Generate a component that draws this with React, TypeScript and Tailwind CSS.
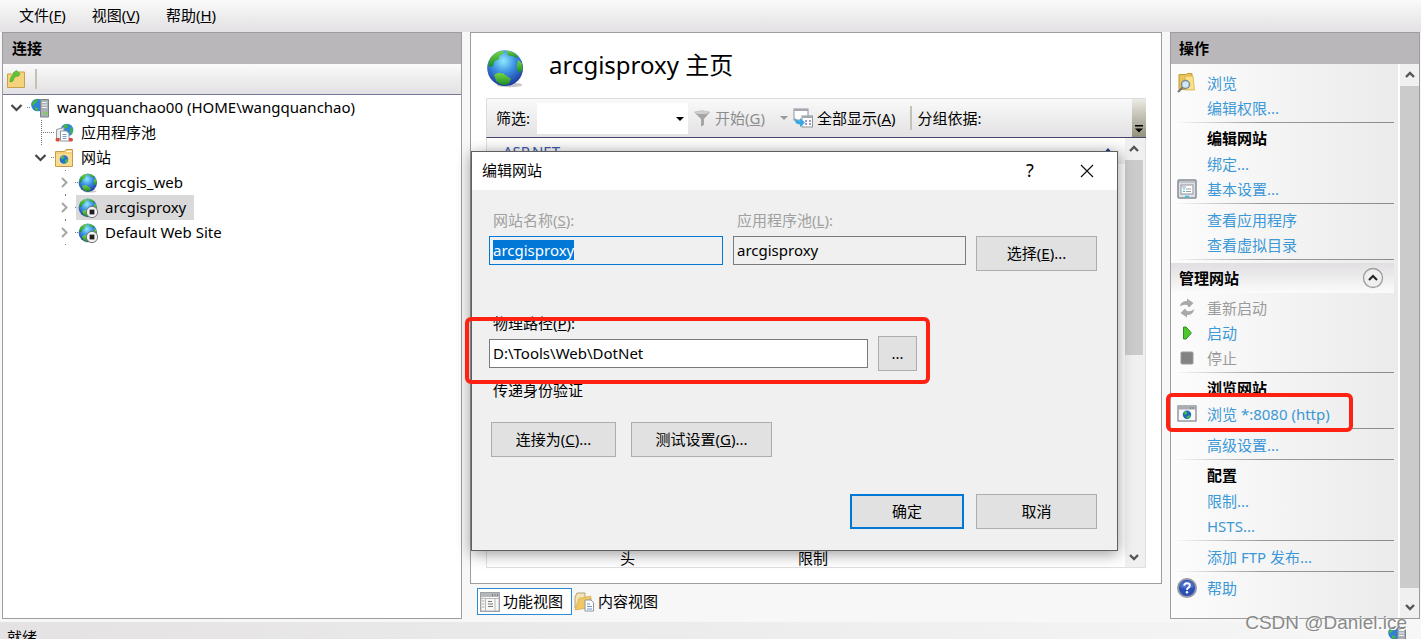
import { useEffect, useRef } from "react";
import type { ReactNode } from "react";

const Globe = ({ className = "size-5", stopped = false }: { className?: string; stopped?: boolean }) => (
  <svg viewBox="0 0 20 20" className={`${className} shrink-0`} aria-hidden="true">
    <defs>
      <radialGradient id="sea" cx="0.45" cy="0.3" r="0.72">
        <stop offset="0" stopColor="#8eeafd" />
        <stop offset="0.45" stopColor="#3c92e2" />
        <stop offset="1" stopColor="#1c3299" />
      </radialGradient>
      <linearGradient id="land" x1="0" y1="0" x2="0" y2="1">
        <stop offset="0" stopColor="#7ad63c" />
        <stop offset="1" stopColor="#178a2b" />
      </linearGradient>
    </defs>
    <ellipse cx="12" cy="18.4" rx="6.5" ry="1.2" fill="#c6c6c6" />
    <circle cx="9.8" cy="9.8" r="9.2" fill="url(#sea)" />
    <path d="M1.2 8.4 2.2 4.6 5.3 1.8 9 .8 8.8 2.3 6.8 3.4 6.6 5.2 4.4 6.2 3.6 8.6 2 9.4z" fill="url(#land)" />
    <path d="M10.6.8 14.5 1.9 16.6 4.1 15.2 4.5 13.3 3.3 12 3.7 10.9 2.4z" fill="url(#land)" />
    <path d="M16.5 5.6 18.2 7 18.9 10 17.4 12.3 16 10.8 15.8 8.4z" fill="url(#land)" />
    <path d="M4.2 13.2 6.2 12.2 8.8 12.6 10.6 13.9 12.8 15.2 12 17.4 9.8 18.6 7.2 17.9 5.2 16.4z" fill="url(#land)" />
    {stopped && (
      <>
        <circle cx="14" cy="14" r="5.6" fill="#f4f4f4" stroke="#777" />
        <rect x="11.6" y="11.6" width="4.8" height="4.8" fill="#1f1f1f" />
      </>
    )}
  </svg>
);

const ServerIcon = () => (
  <svg viewBox="0 0 20 20" className="size-5 shrink-0" aria-hidden="true">
    <circle cx="7.5" cy="7" r="6.3" fill="#2f7fdc" />
    <path d="M2 5 5 1.6 8 1 7 4 4 6.5 3 9zM5 9l3 1v3l-3-1z" fill="#45b83a" />
    <path d="M10.5 1.5h8V19h-8z" fill="#a9b0b5" stroke="#7a8288" />
    <path d="M12 4.5h5M12 7h5M12 9.5h5" stroke="#eef1f3" />
    <rect x="14.5" y="14" width="2.5" height="2.5" fill="#6edb3b" />
  </svg>
);

const PoolIcon = () => (
  <svg viewBox="0 0 20 20" className="size-5 shrink-0" aria-hidden="true">
    <circle cx="13" cy="7" r="6.3" fill="#2f86dc" />
    <path d="M9 2 13 1l1 3-3 2zM17 3l2 4-1 5-2-3z" fill="#43b53b" />
    <path d="M2.5 6.5 10 4.5v11l-7.5 1z" fill="#ececec" stroke="#999" />
    <path d="M6.5 8h6L15 10.5V18H6.5z" fill="#fff" stroke="#8f9499" />
    <path d="M8.5 11.5h4M8.5 13.5h4M8.5 15.5h4" stroke="#6f9ad2" />
    <path d="M1.5 16.5Q1.5 15 3 15h2.5v3.5H3q-1.5 0-1.5-2zM15 15h2.5q1.500 0 1.5 1.5 0 2-1.5 2H15z" fill="#d64a42" />
  </svg>
);

const SitesIcon = () => (
  <svg viewBox="0 0 20 20" className="size-5 shrink-0" aria-hidden="true">
    <path d="M1.5 3.5h9l1.5-2h6.5v17h-17z" fill="#f3cf77" stroke="#c89c45" />
    <path d="M2 6h16v12H2z" fill="#f8dc92" />
    <path d="M12.5 3.5h5" stroke="#fff" />
    <circle cx="10" cy="11.5" r="4.3" fill="#2572cf" />
    <path d="M6.5 9.5 9 7.5l1.5 2-2 2zM11 12l3-1-.5 3-2 1.5z" fill="#52bd3d" />
  </svg>
);

const Chevron = ({ up = false }: { up?: boolean }) => (
  <svg viewBox="0 0 10 8" className="w-[10px] h-2" aria-hidden="true">
    <path d={up ? "M1 6 5 2 9 6" : "M1 2 5 6 9 2"} fill="none" stroke="#555" strokeWidth="2.4" />
  </svg>
);

const Gutter = ({ kind }: { kind: "open" | "leaf" | "closed" }) => (
  <svg viewBox="0 0 20 25" className="w-5 h-[25px] shrink-0 overflow-visible" fill="none" aria-hidden="true">
    {kind === "open" && (
      <>
        <path d="M3.5 10 8.5 15 13.5 10" stroke="#444" strokeWidth="2.2" />
        <path d="M19 12.5h4" stroke="#777" strokeDasharray="1 1" />
      </>
    )}
    {kind === "leaf" && <path d="M9.5 0v25M11 12.5h12" stroke="#777" strokeDasharray="1 1" />}
    {kind === "closed" && (
      <>
        <path d="M6 8 10.5 12.5 6 17" stroke="#a6a6a6" strokeWidth="2" />
        <path d="M9.5 0v2M9.5 24v1M19 12.5h4" stroke="#777" strokeDasharray="1 1" />
      </>
    )}
  </svg>
);

type TreeRowProps = {
  icon: ReactNode;
  label: string;
  kind: "open" | "leaf" | "closed";
  className?: string;
  selected?: boolean;
};

const TreeRow = ({ icon, label, kind, className = "", selected = false }: TreeRowProps) => (
  <li className={`flex items-center h-[25px] ${className}`}>
    <Gutter kind={kind} />
    <button className={`flex items-center gap-[7px] h-[25px] pl-0.5 pr-2 whitespace-nowrap ${selected ? "bg-[#d9d9d9]" : ""}`}>
      {icon}
      <span className="pb-0.5">{label}</span>
    </button>
  </li>
);

const Separator = () => (
  <div className="h-1.5 pt-0.5 pl-1">
    <div className="h-px bg-linear-to-r from-transparent via-[#999] via-40% to-[#8c8c8c]" />
  </div>
);

const ActionTitle = ({ children }: { children: ReactNode }) => (
  <h3 className="h-[25px] pl-9 leading-[25px] font-bold">{children}</h3>
);

const Action = ({ icon, children, disabled = false }: { icon?: ReactNode; children: ReactNode; disabled?: boolean }) => (
  <div className="flex items-center h-[25px] pl-1.5">
    <span className="flex w-[30px] shrink-0">{icon}</span>
    {disabled
      ? <span className="text-[#9b9b9b]">{children}</span>
      : <a href="#" className="text-[#3c98d6] whitespace-nowrap">{children}</a>}
  </div>
);

const BrowseIcon = () => (
  <svg viewBox="0 0 20 20" className="size-5" aria-hidden="true">
    <path d="M2 1.5h7l1-1h5v16H2z" fill="#e9c55a" stroke="#c49a35" />
    <path d="M8 3h8l1.5 14H8z" fill="#fbe08a" stroke="#d0a845" strokeWidth=".7" />
    <circle cx="8.5" cy="11.5" r="4" fill="#cfe9fa" stroke="#7f8a94" strokeWidth="1.5" />
    <path d="M5.5 14.5 1 19" stroke="#777" strokeWidth="2.2" />
  </svg>
);

const SettingsIcon = () => (
  <svg viewBox="0 0 20 20" className="size-5" aria-hidden="true">
    <rect x="1" y="1" width="18" height="18" rx="1" fill="#dfe2e6" stroke="#868b92" strokeWidth="1.5" />
    <path d="M2 3h16" stroke="#b4b8be" strokeWidth="1.5" />
    <rect x="4" y="6" width="12" height="9" fill="#fff" stroke="#8d9299" />
    <path d="M6 10h2M6 12.5h2" stroke="#3fb2e0" />
    <path d="M9 10h5M9 12.5h5M5 8h4" stroke="#9a9fa5" />
    <path d="M8 17.5h4" stroke="#27c3e8" strokeWidth="1.5" />
  </svg>
);

const RestartIcon = () => (
  <svg viewBox="0 0 20 20" className="size-5" fill="#a9a9a9" aria-hidden="true">
    <path d="M3 8.5Q3.500 3 10 3V.5l6.500 4.500L12 9.500 10 7Q6 6 3 8.500z" />
    <path d="M17 11Q16.500 17 10 17v2.500L3.500 15 8 10.500l2 2.500q4 1 7-2z" />
  </svg>
);

const StartIcon = () => (
  <svg viewBox="0 0 20 20" className="size-5" aria-hidden="true">
    <path d="M6.5 4H9l5 5.5v1L9 16H6.5z" fill="#4cc82c" stroke="#2a8f1b" />
  </svg>
);

const StopIcon = () => (
  <svg viewBox="0 0 20 20" className="size-5" aria-hidden="true">
    <rect x="4" y="4" width="12" height="12" rx="1" fill="#828282" stroke="#9a9a9a" />
  </svg>
);

const SiteWindowIcon = () => (
  <svg viewBox="0 0 20 20" className="size-5" aria-hidden="true">
    <rect x="1" y="2" width="18" height="15" fill="#f8f8f8" stroke="#868b92" strokeWidth="1.3" />
    <path d="M1 4h18" stroke="#a8adb4" strokeWidth="3" />
    <path d="M13 4h1M15.5 4h1" stroke="#555" />
    <circle cx="10" cy="10.8" r="4.2" fill="#2165bd" />
    <path d="M6.5 9 9 7l1.5 2-2 2zM9 13l3.500-2 1 1.500-2.500 2.300z" fill="#3cc240" />
  </svg>
);

const HelpIcon = () => (
  <svg viewBox="0 0 20 20" className="size-5" aria-hidden="true">
    <circle cx="10" cy="10" r="9" fill="#2c4fb5" stroke="#9599a5" strokeWidth="2" />
    <path d="M3 9a7 6 0 0 1 14 0q-7 3-14 0z" fill="#6486dc" opacity=".6" />
    <path d="M7.200 7.800Q7.300 5.200 10 5.200q2.800 0 2.800 2.300 0 1.500-1.600 2.400-1.200.7-1.200 2" fill="none" stroke="#fff" strokeWidth="1.9" />
    <circle cx="10" cy="14.300" r="1.2" fill="#fff" />
  </svg>
);

const ShowAllIcon = () => (
  <svg viewBox="0 0 20 20" className="size-5" aria-hidden="true">
    <rect x="1" y="1" width="14" height="11" fill="#fff" stroke="#8e949b" />
    <path d="M1 2h14" stroke="#a4a9b0" strokeWidth="2" />
    <rect x="9" y="8" width="10.5" height="11" fill="#fff" stroke="#8e949b" />
    <path d="M9 9h10.5" stroke="#a4a9b0" strokeWidth="2" />
    <path d="M12 13h2M16 13h2M12 16h2M16 16h2" stroke="#7777bb" strokeWidth="1.5" />
    <path d="M1.5 9.500Q3 12.500 7 12.500V10l5 4.500L7 19v-2.500Q1 16 1.500 9.500z" fill="#3ba7e4" />
  </svg>
);

const FunnelIcon = () => (
  <svg viewBox="0 0 18 18" className="size-[18px]" aria-hidden="true">
    <path d="M1 3Q9 0 17 3L11 10v6l-3 1.5V10z" fill="#a5a5a5" />
    <ellipse cx="9" cy="3.5" rx="7" ry="1.6" fill="#cfcfcf" />
  </svg>
);

const FeaturesIcon = () => (
  <svg viewBox="0 0 20 20" className="size-5" aria-hidden="true">
    <rect x=".7" y=".7" width="18.6" height="18.6" fill="#f7f7f5" stroke="#9a9da2" strokeWidth="1.3" />
    <path d="M1 3h18" stroke="#b4b7bc" strokeWidth="4" />
    <path d="M12 3h1M14.500 3h1M17 3h1" stroke="#444" />
    <path d="M1 6.500h18M5.500 6v13M15 6v13" stroke="#b9b9b9" />
    <path d="M2 9h2.500M2 12h2.500M2 15h2.500" stroke="#aaa" />
    <path d="M8 9.500h4M8 12h5M8 14.500h5" stroke="#777" />
  </svg>
);

const ContentIcon = () => (
  <svg viewBox="0 0 20 20" className="size-5" aria-hidden="true">
    <path d="M3 1h8v5h6v10H1V5z" fill="#f3e3b5" stroke="#b3a478" />
    <path d="M5 6.500 17 4l-3 12-13 2z" fill="#f0c863" stroke="#cfa247" strokeWidth=".6" />
    <path d="M11 8h6l2.500 2.500V19H11z" fill="#fff" stroke="#8f959c" />
    <path d="M13 12h3M13 14.500h5M13 17h5" stroke="#6797d8" />
  </svg>
);

const dialogButton = "h-[35px] pb-0.5 border border-[#adadad] bg-[#e1e1e1]";
const dialogInput = "h-[29px] px-[3px] pb-0.5 border outline-none";

const EditSiteDialog = () => {
  const nameRef = useRef<HTMLInputElement>(null);

  useEffect(() => {
    nameRef.current?.focus();
    nameRef.current?.select();
  }, []);

  return (
    <section
      role="dialog"
      aria-labelledby="dialog-title"
      className="absolute left-[471px] top-[151px] w-[647px] h-[400px] flex flex-col border border-[#5f5f5f] bg-[#f0f0f0] shadow-[0_3px_14px_rgba(0,0,0,0.4)]"
    >
      <header className="flex items-center h-[38px] shrink-0 bg-white pl-2.5 pr-5">
        <h2 id="dialog-title" className="flex-1 pb-0.5">编辑网站</h2>
        <button className="w-[30px] pb-0.5 text-lg leading-5" aria-label="帮助">?</button>
        <button className="flex justify-center ml-8 w-5" aria-label="关闭">
          <svg viewBox="0 0 14 14" className="size-3.5" aria-hidden="true">
            <path d="M1 1 13 13M13 1 1 13" stroke="#111" strokeWidth="1.2" />
          </svg>
        </button>
      </header>

      <form className="flex flex-col flex-1 pl-[17px] pr-5 pt-5 pb-[21px]" onSubmit={(e) => e.preventDefault()}>
        <div className="flex items-start gap-2.5">
          <div className="w-[234px]">
            <label htmlFor="site-name" className="block h-[26px] pl-1 leading-5 text-[#a0a0a0]">
              网站名称(<u>S</u>):
            </label>
            <input
              id="site-name"
              ref={nameRef}
              readOnly
              defaultValue="arcgisproxy"
              className={`${dialogInput} w-full border-[#0078d7] bg-[#f0f0f0] selection:bg-[#0078d7] selection:text-white`}
            />
          </div>
          <div className="w-[233px]">
            <label htmlFor="site-pool" className="block h-[26px] pl-1 leading-5 text-[#a0a0a0]">
              应用程序池(<u>L</u>):
            </label>
            <input
              id="site-pool"
              readOnly
              defaultValue="arcgisproxy"
              className={`${dialogInput} w-full border-[#7a7a7a] bg-[#f0f0f0]`}
            />
          </div>
          <button className={`${dialogButton} flex-1 mt-[26px]`}>选择(<u>E</u>)...</button>
        </div>

        <label htmlFor="site-path" className="h-6 mt-[41px] pl-1 leading-[22px]">
          物理路径(<u>P</u>):
        </label>
        <div className="flex items-center gap-2.5">
          <input
            id="site-path"
            defaultValue="D:\Tools\Web\DotNet"
            className={`${dialogInput} w-[379px] border-[#7a7a7a] bg-white`}
          />
          <button className={`${dialogButton} w-[39px]`} aria-label="选择路径">...</button>
        </div>

        <h3 className="mt-2 pl-1 leading-[22px]">传递身份验证</h3>
        <div className="flex gap-[15px] mt-[21px] pl-0.5">
          <button className={`${dialogButton} w-[125px]`}>连接为(<u>C</u>)...</button>
          <button className={`${dialogButton} w-[141px]`}>测试设置(<u>G</u>)...</button>
        </div>

        <div className="flex justify-end gap-3 mt-auto">
          <button className="w-[114px] h-[35px] pb-0.5 border-2 border-[#0078d7] bg-[#e1e1e1]">确定</button>
          <button className={`${dialogButton} w-[121px]`}>取消</button>
        </div>
      </form>
    </section>
  );
};

const ConnectionsPane = () => (
  <aside className="w-[460px] shrink-0 flex flex-col border border-[#9d9d9d] bg-white">
    <h2 className="h-[31px] shrink-0 pl-[9px] leading-[31px] font-bold bg-[#bab7ba]">连接</h2>
    <div className="flex items-center gap-2.5 h-[31px] shrink-0 px-1 border-b border-[#77779c] bg-linear-to-b from-[#fafafa] to-[#e3e1e3]">
      <button aria-label="向上">
        <svg viewBox="0 0 18 18" className="size-[18px]" aria-hidden="true">
          <path d="M.5 4h8l2-2h7v15.500H.5z" fill="#f5d27c" stroke="#c7a04c" />
          <path d="M3 12Q3.500 5 7.500 4.500L6 3 9.500.500 13 4 11 6.500 9.500 6Q6 8 6 11z" fill="#5cc836" stroke="#3c9b28" strokeWidth=".6" />
        </svg>
      </button>
      <span className="w-0.5 h-5 bg-[#c5c2b4]" />
    </div>
    <ul className="pl-[5px]">
      <TreeRow kind="open" icon={<ServerIcon />} label="wangquanchao00 (HOME\wangquanchao)" />
      <TreeRow kind="leaf" className="pl-6" icon={<PoolIcon />} label="应用程序池" />
      <TreeRow kind="open" className="pl-6" icon={<SitesIcon />} label="网站" />
      <TreeRow kind="closed" className="pl-12" icon={<Globe />} label="arcgis_web" />
      <TreeRow kind="closed" className="pl-12" icon={<Globe stopped />} label="arcgisproxy" selected />
      <TreeRow kind="closed" className="pl-12" icon={<Globe stopped />} label="Default Web Site" />
    </ul>
  </aside>
);

const HomePane = () => (
  <main className="flex-1 min-w-0 flex flex-col">
    <div className="flex-1 flex flex-col border border-[#9d9d9d] bg-white px-[15px] pb-[15px]">
      <div className="flex items-center h-[65px] shrink-0 gap-6">
        <Globe className="size-[39px] mt-1.5" />
        <h1 className="pb-0.5 text-[24px] leading-8">arcgisproxy 主页</h1>
      </div>

      <div className="flex items-center h-10 shrink-0 border-t border-l border-[#dcdcdc] border-b border-b-[#45456f] bg-linear-to-b from-[#fafafa] to-[#e3e1e3] whitespace-nowrap">
        <label htmlFor="filter" className="w-[50px] pl-[9px]">筛选:</label>
        <div className="relative w-[151px] h-[31px]">
          <select id="filter" className="appearance-none block w-full h-full bg-white" />
          <svg viewBox="0 0 8 4" className="absolute right-1 top-[14px] w-2 h-1 pointer-events-none" aria-hidden="true">
            <path d="M0 0h8L4 4z" />
          </svg>
        </div>
        <button className="flex items-center gap-1 ml-[5px] text-[#8d8d8d]" disabled>
          <FunnelIcon />
          <span>开始(<u>G</u>)</span>
          <svg viewBox="0 0 8 4" className="w-2 h-1 ml-[11px]" fill="#9a9a9a" aria-hidden="true">
            <path d="M0 0h8L4 4z" />
          </svg>
        </button>
        <button className="flex items-center gap-1 ml-[5px]">
          <ShowAllIcon />
          <span>全部显示(<u>A</u>)</span>
        </button>
        <span className="w-0.5 h-6 ml-3.5 mr-1.5 bg-[#c5c2b4]" />
        <span>分组依据:</span>
        <button className="flex items-end justify-center w-[14px] h-full ml-auto pb-1 bg-linear-to-b from-[#ecebe6] to-[#94917c]" aria-label="更多">
          <svg viewBox="0 0 8 8" className="size-2" aria-hidden="true">
            <path d="M0 0h8v1.500H0zM0 3.500h8l-4 4z" />
          </svg>
        </button>
      </div>

      <div className="flex-1 flex border border-t-0 border-[#e0e0e0]">
        <div className="flex-1 flex flex-col justify-between">
          <div className="flex items-center h-[26px] pl-4 pr-3 bg-linear-to-b from-white to-[#ececec]">
            <h2 className="text-[#3b58a8]">ASP.NET</h2>
            <span className="flex-1 h-px ml-1 mr-4 bg-[#b9c3dc]" />
            <svg viewBox="0 0 10 6" className="w-2.5 h-1.5" fill="#173c96" aria-hidden="true">
              <path d="M0 6 5 0 10 6z" />
            </svg>
          </div>
          <div className="flex h-[18px] leading-[18px]">
            <span className="w-[178px] ml-[133px]">头</span>
            <span>限制</span>
          </div>
        </div>
        <div className="w-5 pr-0.5 flex flex-col items-center bg-[#f0f0f0]">
          <span className="flex items-center h-[22px]"><Chevron up /></span>
          <span className="w-full h-[195px] bg-[#cbcbcb]" />
          <span className="flex items-center h-5 mt-auto"><Chevron /></span>
        </div>
      </div>
    </div>

    <div className="flex items-center h-[35px] shrink-0 pl-[7px]">
      <button className="flex items-center gap-[3px] w-[95px] h-[27px] pl-0.5 border border-[#2a8ad8] bg-white whitespace-nowrap">
        <FeaturesIcon />
        <span className="pb-0.5">功能视图</span>
      </button>
      <button className="flex items-center gap-1 ml-0.5 whitespace-nowrap">
        <ContentIcon />
        <span className="pb-0.5">内容视图</span>
      </button>
    </div>
  </main>
);

const ActionsPane = () => (
  <aside className="w-[250px] shrink-0 flex flex-col border border-[#9d9d9d] bg-[#f0f0f0]">
    <h2 className="h-[31px] shrink-0 pl-2 leading-[31px] font-bold bg-[#bab7ba]">操作</h2>
    <div className="flex-1 min-h-0 flex">
      <div className="flex-1 pt-1.5 pr-1 bg-linear-to-r from-[#fcfcfc] to-[#ebebeb]">
        <Action icon={<BrowseIcon />}>浏览</Action>
        <Action>编辑权限...</Action>
        <Separator />
        <ActionTitle>编辑网站</ActionTitle>
        <Action>绑定...</Action>
        <Action icon={<SettingsIcon />}>基本设置...</Action>
        <Separator />
        <Action>查看应用程序</Action>
        <Action>查看虚拟目录</Action>
        <Separator />
        <div className="flex items-center justify-between h-[30px] mb-0.5 pl-2 pr-2.5 bg-linear-to-b from-[#e1dfe1] to-[#fbfbfb]">
          <h3 className="font-bold">管理网站</h3>
          <button aria-label="折叠">
            <svg viewBox="0 0 22 22" className="size-[22px]" fill="none" aria-hidden="true">
              <circle cx="11" cy="11" r="9.500" fill="#efefef" stroke="#9b9b9b" strokeWidth="1.300" />
              <path d="M7 13 11 9 15 13" stroke="#222" strokeWidth="2" />
            </svg>
          </button>
        </div>
        <Action icon={<RestartIcon />} disabled>重新启动</Action>
        <Action icon={<StartIcon />}>启动</Action>
        <Action icon={<StopIcon />} disabled>停止</Action>
        <Separator />
        <ActionTitle>浏览网站</ActionTitle>
        <Action icon={<SiteWindowIcon />}>浏览 *:8080 (http)</Action>
        <Separator />
        <Action>高级设置...</Action>
        <Separator />
        <ActionTitle>配置</ActionTitle>
        <Action>限制...</Action>
        <Action>HSTS...</Action>
        <Separator />
        <Action>添加 FTP 发布...</Action>
        <Separator />
        <Action icon={<HelpIcon />}>帮助</Action>
      </div>
      <div className="w-[21px] flex flex-col items-center border-l-2 border-white">
        <span className="flex items-center h-[22px]"><Chevron up /></span>
        <span className="w-full flex-1 bg-[#cbcbcb]" />
        <span className="flex items-center h-[30px] pt-2"><Chevron /></span>
      </div>
    </div>
  </aside>
);

const App = () => (
  <div className="relative h-screen flex flex-col overflow-hidden bg-[#f7f7f7] text-black text-[15px] leading-[22px] font-['Noto_Sans','Noto_Sans_CJK_SC',sans-serif]">
    <nav className="flex items-center gap-[26px] h-8 shrink-0 pl-[19px] pb-0.5 bg-linear-to-b from-[#fafafa] to-[#e3e1e3]">
      <button>文件(<u>F</u>)</button>
      <button>视图(<u>V</u>)</button>
      <button>帮助(<u>H</u>)</button>
    </nav>

    <div className="flex-1 min-h-0 flex gap-2 pl-0.5 pr-px">
      <ConnectionsPane />
      <HomePane />
      <ActionsPane />
    </div>

    <footer className="flex justify-between h-[17px] mt-[3px] shrink-0 pl-[7px] pr-3.5 pt-1 overflow-hidden bg-linear-to-r from-[#e4e2e3] to-[#f7f7f7]">
      <span>就绪</span>
      <ServerIcon />
    </footer>

    <EditSiteDialog />

    {/* highlight boxes */}
    <div className="absolute left-[465px] top-[317px] w-[465px] h-[67px] border-4 border-[#ff2212] rounded-md pointer-events-none" />
    <div className="absolute left-[1166px] top-[393px] w-[187px] h-[39px] border-4 border-[#ff2212] rounded-md pointer-events-none" />

    <span className="absolute right-3.5 bottom-1 text-[19px] leading-6 text-[#8a8a8a] font-['Liberation_Sans',sans-serif] [text-shadow:1px_1px_0_#fff] pointer-events-none">
      CSDN @Daniel.ice
    </span>
  </div>
);

export default App;
